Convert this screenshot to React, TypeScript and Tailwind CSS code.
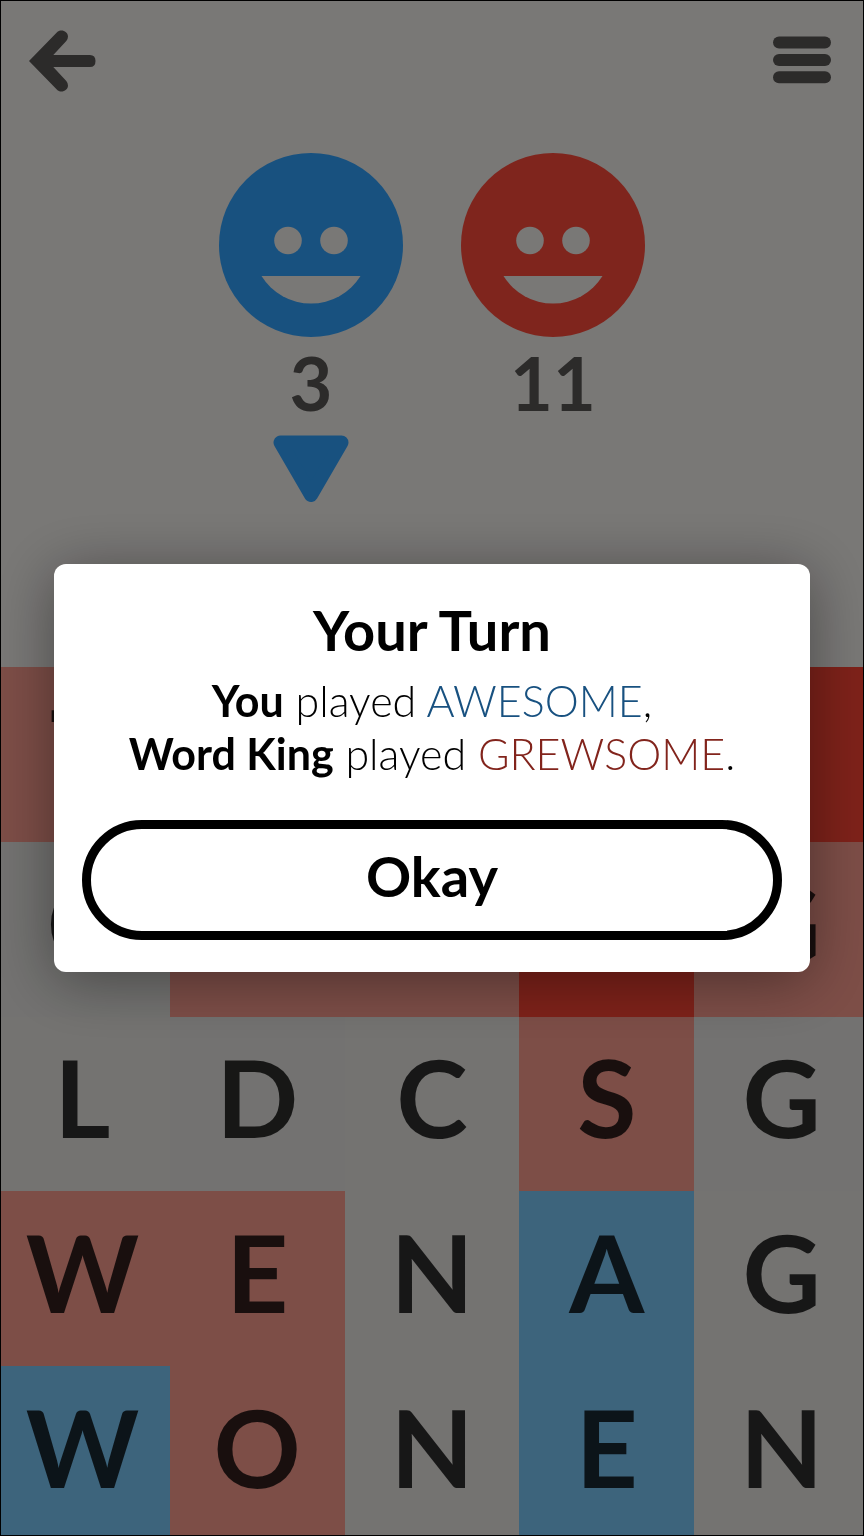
type Tone = "plain" | "pale" | "red" | "redDark" | "blue";

type Tile = { letter?: string; tone: Tone };

const TONES: Record<Tone, string> = {
  plain: "bg-[#e6e5e2]",
  pale: "bg-[#e8e6e3]",
  red: "bg-[#fa9c8f]",
  redDark: "bg-[#fc4434]",
  blue: "bg-[#7ac8f8]",
};

const TILES: Tile[] = [
  { letter: "T", tone: "red" },
  { tone: "red" },
  { tone: "red" },
  { tone: "redDark" },
  { letter: "E", tone: "redDark" },

  { letter: "C", tone: "plain" },
  { tone: "red" },
  { tone: "red" },
  { tone: "redDark" },
  { letter: "G", tone: "red" },

  { letter: "L", tone: "pale" },
  { letter: "D", tone: "plain" },
  { letter: "C", tone: "pale" },
  { letter: "S", tone: "red" },
  { letter: "G", tone: "plain" },

  { letter: "W", tone: "red" },
  { letter: "E", tone: "red" },
  { letter: "N", tone: "pale" },
  { letter: "A", tone: "blue" },
  { letter: "G", tone: "pale" },

  { letter: "W", tone: "blue" },
  { letter: "O", tone: "red" },
  { letter: "N", tone: "pale" },
  { letter: "E", tone: "blue" },
  { letter: "N", tone: "pale" },
];

function BackIcon() {
  return (
    <svg width="67" height="62" viewBox="0 0 67 62" fill="currentColor">
      <path d="M0 31 L28.5 1.8 C32.5 -1.4 39 1.5 39 6.5 Q39 9 37.3 11 L24.3 25 H61 Q66.5 25 66.5 31 Q66.5 37 61 37 H24.3 L37.3 51 Q39 53 39 55.5 C39 60.5 32.5 63.4 28.5 60.2 Z" />
    </svg>
  );
}

function MenuIcon() {
  return (
    <svg width="58" height="50" viewBox="0 0 58 50" fill="currentColor">
      <rect y="0.5" width="58" height="12" rx="6" />
      <rect y="18" width="58" height="12" rx="6" />
      <rect y="35.3" width="58" height="12" rx="6" />
    </svg>
  );
}

function Face() {
  return (
    <svg width="184" height="184" viewBox="0 0 184 184">
      <circle cx="92" cy="92" r="92" fill="currentColor" />
      <g fill="#f3f0ed">
        <circle cx="69" cy="87.5" r="13.8" />
        <circle cx="115" cy="87.5" r="13.8" />
        <path d="M42.5 123 H141.5 A58.3 58.3 0 0 1 42.5 123 Z" />
      </g>
    </svg>
  );
}

function Player({ score, color, active }: { score: number; color: string; active?: boolean }) {
  return (
    <div className={`flex flex-col items-center ${color}`}>
      <Face />
      <span className="text-[74px] leading-[92px] font-bold text-[#595755]">{score}</span>
      {active && (
        <svg className="mt-1.5" width="76" height="68" viewBox="0 0 76 68">
          <path
            d="M7.5 7.5 H68.5 L38 60 Z"
            fill="currentColor"
            stroke="currentColor"
            strokeWidth="14"
            strokeLinejoin="round"
          />
        </svg>
      )}
    </div>
  );
}

function TurnDialog() {
  return (
    <div className="fixed inset-0 flex items-center justify-center bg-black/50">
      <div
        role="dialog"
        aria-labelledby="turn-title"
        className="w-7/8 rounded-xl bg-white px-7 py-8 text-center text-black shadow-[0_8px_60px_rgba(0,0,0,0.4)]"
      >
        <h2 id="turn-title" className="pt-0.5 text-[56px] leading-[64px] font-bold">
          Your Turn
        </h2>
        <p className="mt-3 text-[43px] leading-[53px] font-light">
          <strong className="font-bold">You</strong> played <span className="text-[#185180]">AWESOME</span>,
          <br />
          <strong className="font-bold">Word King</strong> played <span className="text-[#82241c]">GREWSOME</span>.
        </p>
        <button
          type="button"
          className="mt-10 h-[120px] w-full rounded-full border-[9px] border-black pb-2 text-[56px] leading-[64px] font-bold"
        >
          Okay
        </button>
      </div>
    </div>
  );
}

export default function App() {
  return (
    <div className="flex h-screen flex-col overflow-hidden border border-black bg-[#f3f0ed] font-['Lato',sans-serif]">
      <header className="flex h-[120px] shrink-0 items-center justify-between pr-8 pl-7 text-[#595755]">
        <button type="button" aria-label="Back">
          <BackIcon />
        </button>
        <button type="button" aria-label="Menu">
          <MenuIcon />
        </button>
      </header>

      <section className="flex shrink-0 justify-center gap-[58px] pt-8 pb-[164px]">
        <Player score={3} color="text-[#30a3ff]" active />
        <Player score={11} color="text-[#ff4a3a]" />
      </section>

      <main className="-mx-1.5 grid shrink-0 grid-cols-5">
        {TILES.map((tile, i) => (
          <div
            key={i}
            className={`flex aspect-square items-center justify-center pb-4 text-[108px] leading-none font-bold text-black/80 ${TONES[tile.tone]}`}
          >
            {tile.letter}
          </div>
        ))}
      </main>

      <TurnDialog />
    </div>
  );
}
